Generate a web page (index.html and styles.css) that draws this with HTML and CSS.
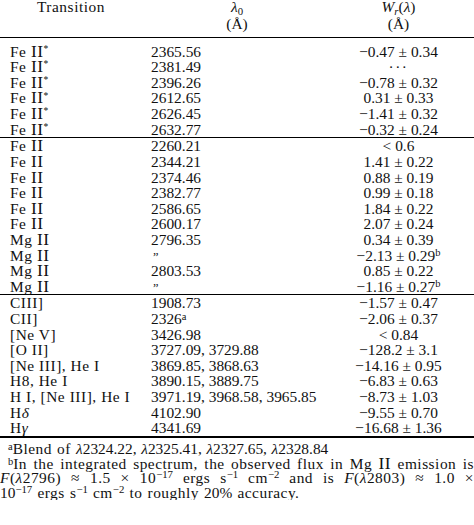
FILE: index.html
```html
<!DOCTYPE html>
<html>
<head>
<meta charset="utf-8">
<link rel="stylesheet" href="styles.css">
</head>
<body>
<div class="page">
  <div class="grid head">
    <div class="c1"><div class="hl1">Transition</div></div>
    <div class="c2 ctr"><div class="hl1"><span class="m">λ</span><sub class="sb">0</sub></div><div class="hl2">(Å)</div></div>
    <div class="c3"><div class="hl1"><span class="m">W<sub class="sb">r</sub></span>(<span class="m">λ</span>)</div><div class="hl2">(Å)</div></div>
  </div>
  <div class="rule"></div>
  <div class="body">
    <div class="grid row"><div class="c1">Fe <span class="rn">II</span><sup class="st">*</sup></div><div class="c2">2365.56</div><div class="c3">−0.47 ± 0.34</div></div>
    <div class="grid row"><div class="c1">Fe <span class="rn">II</span><sup class="st">*</sup></div><div class="c2">2381.49</div><div class="c3"><span class="dots">···</span></div></div>
    <div class="grid row"><div class="c1">Fe <span class="rn">II</span><sup class="st">*</sup></div><div class="c2">2396.26</div><div class="c3">−0.78 ± 0.32</div></div>
    <div class="grid row"><div class="c1">Fe <span class="rn">II</span><sup class="st">*</sup></div><div class="c2">2612.65</div><div class="c3">0.31 ± 0.33</div></div>
    <div class="grid row"><div class="c1">Fe <span class="rn">II</span><sup class="st">*</sup></div><div class="c2">2626.45</div><div class="c3">−1.41 ± 0.32</div></div>
    <div class="grid row"><div class="c1">Fe <span class="rn">II</span><sup class="st">*</sup></div><div class="c2">2632.77</div><div class="c3">−0.32 ± 0.24</div></div>
    <div class="rule mid"></div>
    <div class="grid row"><div class="c1">Fe <span class="rn">II</span></div><div class="c2">2260.21</div><div class="c3">&lt; 0.6</div></div>
    <div class="grid row"><div class="c1">Fe <span class="rn">II</span></div><div class="c2">2344.21</div><div class="c3">1.41 ± 0.22</div></div>
    <div class="grid row"><div class="c1">Fe <span class="rn">II</span></div><div class="c2">2374.46</div><div class="c3">0.88 ± 0.19</div></div>
    <div class="grid row"><div class="c1">Fe <span class="rn">II</span></div><div class="c2">2382.77</div><div class="c3">0.99 ± 0.18</div></div>
    <div class="grid row"><div class="c1">Fe <span class="rn">II</span></div><div class="c2">2586.65</div><div class="c3">1.84 ± 0.22</div></div>
    <div class="grid row"><div class="c1">Fe <span class="rn">II</span></div><div class="c2">2600.17</div><div class="c3">2.07 ± 0.24</div></div>
    <div class="grid row"><div class="c1">Mg <span class="rn">II</span></div><div class="c2">2796.35</div><div class="c3">0.34 ± 0.39</div></div>
    <div class="grid row"><div class="c1">Mg <span class="rn">II</span></div><div class="c2"><span class="q">”</span></div><div class="c3">−2.13 ± 0.29<sup class="fn">b</sup></div></div>
    <div class="grid row"><div class="c1">Mg <span class="rn">II</span></div><div class="c2">2803.53</div><div class="c3">0.85 ± 0.22</div></div>
    <div class="grid row"><div class="c1">Mg <span class="rn">II</span></div><div class="c2"><span class="q">”</span></div><div class="c3">−1.16 ± 0.27<sup class="fn">b</sup></div></div>
    <div class="rule mid"></div>
    <div class="grid row"><div class="c1">CIII]</div><div class="c2">1908.73</div><div class="c3">−1.57 ± 0.47</div></div>
    <div class="grid row"><div class="c1">CII]</div><div class="c2">2326<sup class="fn">a</sup></div><div class="c3">−2.06 ± 0.37</div></div>
    <div class="grid row"><div class="c1">[Ne V]</div><div class="c2">3426.98</div><div class="c3">&lt; 0.84</div></div>
    <div class="grid row"><div class="c1">[O II]</div><div class="c2">3727.09, 3729.88</div><div class="c3">−128.2 ± 3.1</div></div>
    <div class="grid row"><div class="c1">[Ne III], He I</div><div class="c2">3869.85, 3868.63</div><div class="c3">−14.16 ± 0.95</div></div>
    <div class="grid row"><div class="c1">H8, He I</div><div class="c2">3890.15, 3889.75</div><div class="c3">−6.83 ± 0.63</div></div>
    <div class="grid row"><div class="c1">H I, [Ne III], He I</div><div class="c2">3971.19, 3968.58, 3965.85</div><div class="c3">−8.73 ± 1.03</div></div>
    <div class="grid row"><div class="c1">H<span class="m">δ</span></div><div class="c2">4102.90</div><div class="c3">−9.55 ± 0.70</div></div>
    <div class="grid row"><div class="c1">H<span class="m">γ</span></div><div class="c2">4341.69</div><div class="c3">−16.68 ± 1.36</div></div>
  </div>
  <div class="rule thick"></div>
  <div class="notes">
    <p class="note"><sup class="fn">a</sup>Blend of <span class="num"><span class="m">λ</span>2324.22, <span class="m">λ</span>2325.41, <span class="m">λ</span>2327.65, <span class="m">λ</span>2328.84</span></p>
    <p class="note just"><sup class="fn">b</sup>In the integrated spectrum, the observed flux in Mg <span class="rn">II</span> emission is</p>
    <p class="line just"><span class="m">F</span>(<span class="m">λ</span>2796) ≈ 1.5 × 10<sup class="ex">−17</sup> ergs s<sup class="ex">−1</sup> cm<sup class="ex">−2</sup> and is <span class="m">F</span>(<span class="m">λ</span>2803) ≈ 1.0 ×</p>
    <p class="line"><span class="num">10</span><sup class="ex">−17</sup> ergs s<sup class="ex">−1</sup> cm<sup class="ex">−2</sup> to roughly <span class="num">20%</span> accuracy.</p>
  </div>
</div>
</body>
</html>
```

FILE: styles.css
```css
html, body {
  margin: 0;
  padding: 0;
  background: #ffffff;
}

.page {
  width: 474px;
  font-family: "Liberation Serif", "DejaVu Serif", serif;
  font-size: 15.4px;
  color: #111111;
}

.grid {
  display: grid;
  grid-template-columns: 151px 172px 151px;
}

.c1 {
  padding-left: 10px;
  padding-right: 19px;
  white-space: nowrap;
  letter-spacing: 0.55px;
}

.c2 {
  white-space: nowrap;
}

.c3 {
  text-align: center;
  white-space: nowrap;
}

.head {
  line-height: 14px;
  padding-bottom: 6px;
}

.hl1 {
  height: 14px;
}

.hl2 {
  margin-top: 3px;
  height: 14px;
}

.head .c1 {
  text-align: center;
}

.head .ctr {
  text-align: center;
}

.m {
  font-style: italic;
}

.sb {
  font-size: 0.7em;
  line-height: 0;
  vertical-align: baseline;
  position: relative;
  top: 0.3em;
  font-style: normal;
}

.m .sb {
  font-style: italic;
}

.rule {
  height: 1.3px;
  background: #000000;
}

.rule.mid {
  height: 1.2px;
}

.rule.thick {
  height: 2.6px;
}

.body {
  padding-top: 5.3px;
}

.row {
  height: 15.6px;
  line-height: 15.6px;
}

.rn {
  font-size: 1.13em;
  line-height: 0;
}

.st {
  font-size: 0.62em;
  line-height: 0;
  vertical-align: baseline;
  position: relative;
  top: -0.5em;
  letter-spacing: 0;
}

.fn {
  font-size: 0.68em;
  line-height: 0;
  vertical-align: baseline;
  position: relative;
  top: -0.42em;
  letter-spacing: 0;
}

.ex {
  font-size: 0.7em;
  line-height: 0;
  vertical-align: baseline;
  position: relative;
  top: -0.5em;
  letter-spacing: 0;
}

.dots {
  display: inline-block;
  letter-spacing: 1.5px;
}

.q {
  display: inline-block;
  font-size: 0.8em;
  padding-left: 2px;
}

.notes {
  padding-top: 4px;
  line-height: 14.5px;
  letter-spacing: 0.5px;
  word-spacing: 0.8px;
}

.num {
  letter-spacing: 0;
}

.note, .line {
  margin: 0;
  white-space: nowrap;
}

.note {
  padding-left: 8px;
}

.just {
  text-align: justify;
  text-align-last: justify;
  white-space: normal;
}
```
